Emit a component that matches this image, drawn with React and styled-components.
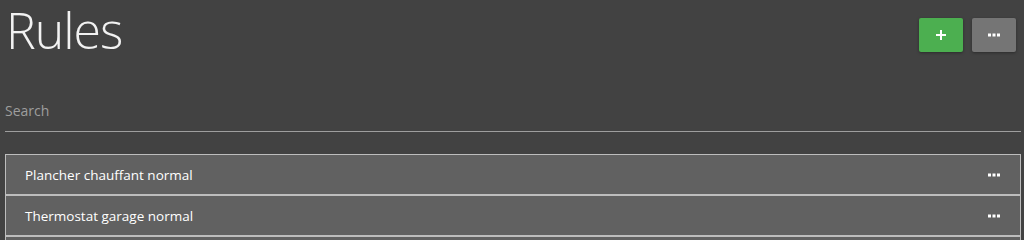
import React from 'react';
import styled, { createGlobalStyle } from 'styled-components';

const GlobalStyle = createGlobalStyle`
  html, body {
    margin: 0;
    padding: 0;
    background: #424242;
    font-family: "Open Sans", "Noto Sans", sans-serif;
    color: #fff;
  }
`;

const Page = styled.div`
  padding: 0 3px 0 5px;
  height: 240px;
  overflow: hidden;
`;

const Header = styled.div`
  display: flex;
  justify-content: space-between;
  align-items: flex-start;
  height: 84px;
`;

const Title = styled.h1`
  margin: 0;
  margin-left: 1px;
  font-family: "Open Sans", sans-serif;
  font-weight: 300;
  font-size: 50px;
  line-height: 60px;
  letter-spacing: -1px;
  color: #f2f2f2;
`;

const Actions = styled.div`
  display: flex;
  gap: 9px;
  margin-top: 18px;
  margin-right: 5px;
`;

const ActionButton = styled.button`
  width: 44px;
  height: 34px;
  border: none;
  border-radius: 2px;
  background: ${({ $green }) => ($green ? '#4caf50' : '#757575')};
  color: #fff;
  display: flex;
  align-items: center;
  justify-content: center;
  padding: 0;
  box-shadow: 0 1px 3px rgba(0, 0, 0, 0.35);
  cursor: pointer;
`;

const SearchField = styled.input`
  display: block;
  width: 100%;
  box-sizing: border-box;
  background: transparent;
  border: none;
  border-bottom: 1px solid #9e9e9e;
  padding: 6px 0 0 0;
  height: 48px;
  font-family: "Open Sans", sans-serif;
  font-size: 14px;
  color: #fff;
  outline: none;
  &::placeholder {
    color: #9e9e9e;
  }
`;

const List = styled.div`
  margin-top: 22px;
  border: 1px solid #bdbdbd;
  border-bottom: none;
`;

const Row = styled.div`
  display: flex;
  align-items: center;
  justify-content: space-between;
  height: 39px;
  background: #616161;
  border-bottom: 2px solid #bdbdbd;
  padding: 0 20px 0 19px;
  font-size: 13.5px;
  color: #fff;
`;

const Dots = ({ size = 12 }) => (
  <svg width={size} height="4" viewBox="0 0 12 4">
    <rect x="0" y="0.5" width="3" height="3" fill="#fff" />
    <rect x="4.5" y="0.5" width="3" height="3" fill="#fff" />
    <rect x="9" y="0.5" width="3" height="3" fill="#fff" />
  </svg>
);

const Plus = () => (
  <svg width="12" height="12" viewBox="0 0 12 12">
    <path d="M6 1v10M1 6h10" stroke="#fff" strokeWidth="2" />
  </svg>
);

const rules = ['Plancher chauffant normal', 'Thermostat garage normal'];

export default function App() {
  return (
    <>
      <GlobalStyle />
      <Page>
        <Header>
          <Title>Rules</Title>
          <Actions>
            <ActionButton $green>
              <Plus />
            </ActionButton>
            <ActionButton>
              <Dots />
            </ActionButton>
          </Actions>
        </Header>
        <SearchField placeholder="Search" />
        <List>
          {rules.map((r) => (
            <Row key={r}>
              <span>{r}</span>
              <Dots />
            </Row>
          ))}
          <Row />
        </List>
      </Page>
    </>
  );
}
